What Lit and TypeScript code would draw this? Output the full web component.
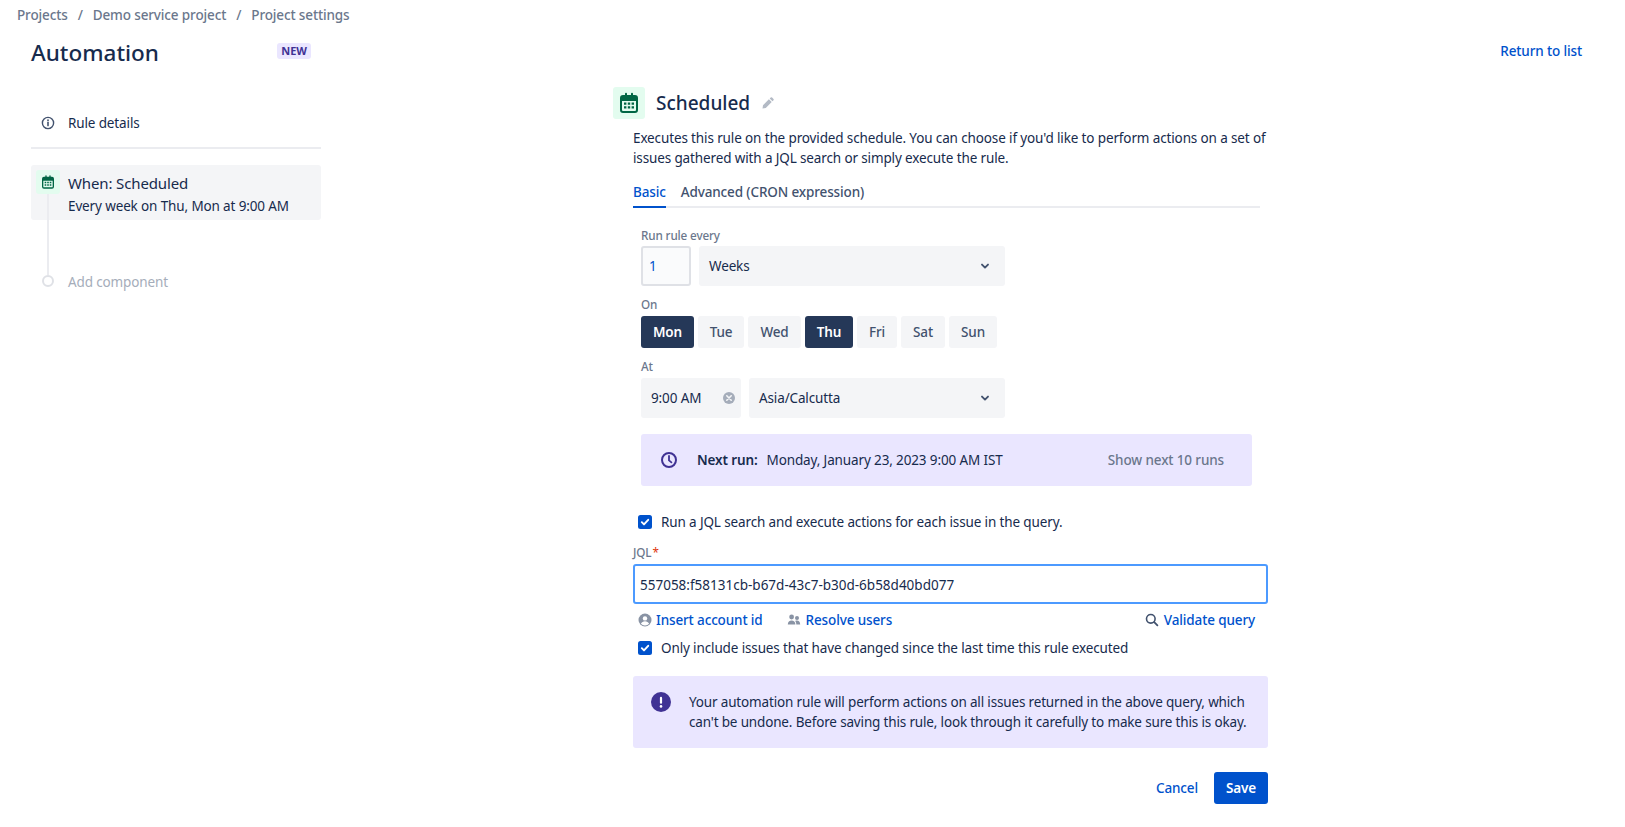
import { LitElement, html, css } from "lit";
import { customElement } from "lit/decorators.js";

const calendar = (s: number) => html`<svg width=${s} height=${s} viewBox="0 0 24 24"><path fill="#006644" fill-rule="evenodd" d="M6 4h2V2.8a1 1 0 0 1 2 0V4h4V2.8a1 1 0 0 1 2 0V4h2a3 3 0 0 1 3 3v12a3 3 0 0 1-3 3H6a3 3 0 0 1-3-3V7a3 3 0 0 1 3-3zm-1 6v9a1 1 0 0 0 1 1h12a1 1 0 0 0 1-1v-9H5z"/><path fill="#006644" d="M7 11.5h2.4v2.2H7zM10.8 11.5h2.4v2.2h-2.4zM14.6 11.5H17v2.2h-2.4zM7 15.3h2.4v2.2H7zM10.8 15.3h2.4v2.2h-2.4zM14.6 15.3H17v2.2h-2.4z"/></svg>`;
const chevron = html`<svg width="16" height="16" viewBox="0 0 16 16"><path d="M5 6.6 8 9.6l3-3" fill="none" stroke="#42526e" stroke-width="1.9" stroke-linecap="round" stroke-linejoin="round"/></svg>`;
const check = html`<svg class="check" width="14" height="14" viewBox="0 0 14 14"><rect width="14" height="14" rx="2.5" fill="#0052cc"/><path d="M3.8 7.2 6 9.4l4.2-4.6" fill="none" stroke="#fff" stroke-width="1.9" stroke-linecap="round" stroke-linejoin="round"/></svg>`;

@customElement("app-root")
export class AppRoot extends LitElement {
  static styles = css`
    :host { display: block; width: 100%; height: 827px; overflow: hidden; background: #fff; color: #172b4d;
      font-family: "Noto Sans", "Open Sans", sans-serif; font-size: 13.5px; letter-spacing: -0.13px; }
    .crumbs { height: 30px; padding-left: 17px; display: flex; align-items: center; color: #6b778c; font-weight: 500; }
    .crumbs .sep { margin: 0 10px; }
    .top { display: flex; align-items: center; height: 32px; margin-top: 5px; padding: 0 43px 0 31px; }
    .title-wrap { width: 280px; display: flex; align-items: center; justify-content: space-between; }
    h1 { margin: 4px 0 0; font-size: 22.5px; font-weight: 500; letter-spacing: 0; line-height: 32px; }
    .lozenge { background: #eae6ff; color: #403294; font-size: 11px; font-weight: 700; line-height: 16px; padding: 0 4px; border-radius: 3px; letter-spacing: 0; }
    .return { margin-left: auto; color: #0052cc; font-weight: 500; }
    .body { display: flex; margin-top: 20px; }
    .side { width: 290px; margin-left: 31px; padding-top: 17px; flex: none; }
    .details { height: 37px; padding-bottom: 6px; display: flex; align-items: center; border-bottom: 2px solid #ebecf0; }
    .details svg { margin-left: 9px; margin-right: 12px; }
    .timeline { position: relative; margin-top: 16px; }
    .card { height: 55px; background: #f4f5f7; border-radius: 3px; display: flex; padding: 5px; box-sizing: border-box; }
    .mini { width: 24px; height: 24px; background: #e3fcef; border-radius: 3px; display: flex; align-items: center; justify-content: center; flex: none; }
    .card-text { margin: 1px 0 0 8px; }
    .card-title { font-size: 15px; line-height: 24px; }
    .card-sub { line-height: 21px; margin-top: 1px; }
    .line { position: absolute; left: 16px; top: 29px; width: 2px; height: 81px; background: #ebecf0; }
    .add { display: flex; align-items: center; height: 20px; margin-top: 51px; color: #a5adba; }
    .add .txt { padding-top: 2px; }
    .dot { width: 8px; height: 8px; border: 2px solid #dfe1e6; border-radius: 50%; margin-left: 11px; margin-right: 14px; }
    .main { width: 655px; margin-left: 292px; flex: none; }
    .head { display: flex; align-items: center; height: 32px; }
    .head-icon { width: 32px; height: 32px; background: #e3fcef; border-radius: 3px; display: flex; align-items: center; justify-content: center; }
    h2 { margin: 0 10px 0 11px; font-size: 19px; font-weight: 500; letter-spacing: 0; }
    .desc { margin: 8.5px 0 0 20px; line-height: 20px; width: 640px; }
    .tabs { margin: 12.5px 0 0 20px; width: 627px; height: 26px; border-bottom: 2px solid #ebecf0; display: flex; gap: 15px; font-weight: 500; color: #42526e; }
    .tab { line-height: 24px; }
    .tab.on { color: #0052cc; border-bottom: 2px solid #0052cc; height: 26px; }
    .form { padding-left: 28px; }
    .lbl { font-size: 11.7px; color: #6b778c; font-weight: 500; line-height: 16px; height: 16px; margin-bottom: 4px; }
    .first { margin-top: 19px; margin-bottom: 3px; }
    .row { display: flex; gap: 8px; }
    .num { width: 50px; height: 40px; box-sizing: border-box; border: 2px solid #dfe1e6; background: #fafbfc; border-radius: 3px; padding-left: 6px; display: flex; align-items: center; color: #0052cc; }
    .select { height: 40px; width: 306px; box-sizing: border-box; background: #f4f5f7; border-radius: 3px; display: flex; align-items: center; justify-content: space-between; padding: 0 12px 0 10px; }
    .select.tz { width: 256px; }
    .on-lbl { margin-top: 10px; }
    .days { display: flex; gap: 4px; }
    .day { height: 32px; border-radius: 3px; background: #f4f5f7; color: #42526e; display: flex; align-items: center; justify-content: center; font-weight: 500; }
    .day.sel { background: #253858; color: #fff; font-weight: 600; }
    .time { width: 100px; height: 40px; box-sizing: border-box; background: #f4f5f7; border-radius: 3px; display: flex; align-items: center; justify-content: space-between; padding: 0 4px 0 10px; }
    .at-lbl { margin-top: 10px; }
    .next { margin-top: 16px; width: 611px; height: 52px; background: #eae6ff; border-radius: 3px; display: flex; align-items: center; padding: 0 28px 0 19px; box-sizing: border-box; }
    .next b { margin: 0 9px 0 19px; font-weight: 600; }
    .show { margin-left: auto; color: #6b778c; font-weight: 500; }
    .chk { display: flex; align-items: center; height: 20px; margin-left: 5px; }
    .chk .check { margin-right: 9px; flex: none; }
    .chk.a { margin-top: 26px; margin-left: 25px; }
    .chk.b { margin-top: 8px; margin-left: 25px; }
    .jql-lbl { margin: 12px 0 4px 20px; font-size: 11.7px; color: #6b778c; font-weight: 500; line-height: 16px; }
    .jql-lbl span { color: #de350b; font-weight: 400; margin-left: 1px; }
    .jql { margin-left: 20px; width: 635px; height: 40px; box-sizing: border-box; border: 2px solid #4c9aff; border-radius: 3px; display: flex; align-items: center; padding: 1px 0 0 5px; letter-spacing: 0; }
    .links { margin: 6px 0 0 20px; width: 617px; height: 20px; display: flex; align-items: center; color: #0052cc; font-weight: 500; padding-left: 5px; }
    .links svg { margin-right: 4px; flex: none; }
    .links .res { margin-left: 24px; }
    .links .res svg { margin-right: 5px; }
    .links .val { margin-left: auto; display: flex; align-items: center; }
    .links span { display: flex; align-items: center; }
    .warn { margin: 18px 0 0 20px; width: 635px; height: 72px; box-sizing: border-box; background: #eae6ff; border-radius: 3px; padding: 16px 16px 16px 17px; display: flex; }
    .warn svg { flex: none; margin-right: 17px; }
    .warn p { margin: 0; line-height: 20px; letter-spacing: -0.16px; }
    .actions { margin-top: 24px; display: flex; justify-content: flex-end; align-items: center; gap: 16px; }
    .cancel { color: #0052cc; font-weight: 500; }
    .save { width: 54px; height: 32px; background: #0052cc; color: #fff; border-radius: 3px; display: flex; align-items: center; justify-content: center; font-weight: 600; }
  `;

  render() {
    const days: [string, number, boolean][] = [["Mon", 53, true], ["Tue", 46, false], ["Wed", 53, false], ["Thu", 48, true], ["Fri", 40, false], ["Sat", 44, false], ["Sun", 48, false]];
    return html`
      <div class="crumbs"><span>Projects</span><span class="sep">/</span><span>Demo service project</span><span class="sep">/</span><span>Project settings</span></div>
      <div class="top">
        <div class="title-wrap"><h1>Automation</h1><span class="lozenge">NEW</span></div>
        <span class="return">Return to list</span>
      </div>
      <div class="body">
        <aside class="side">
          <div class="details">
            <svg width="16" height="16" viewBox="0 0 16 16"><circle cx="8" cy="8" r="5.6" fill="none" stroke="#42526e" stroke-width="1.4"/><path d="M8 7.4v3.2" stroke="#42526e" stroke-width="1.6" stroke-linecap="round"/><circle cx="8" cy="5.2" r="0.9" fill="#42526e"/></svg>
            <span>Rule details</span>
          </div>
          <div class="timeline">
            <div class="card">
              <div class="mini">${calendar(16)}</div>
              <div class="card-text">
                <div class="card-title">When: Scheduled</div>
                <div class="card-sub">Every week on Thu, Mon at 9:00 AM</div>
              </div>
            </div>
            <div class="line"></div>
            <div class="add"><span class="dot"></span><span class="txt">Add component</span></div>
          </div>
        </aside>
        <main class="main">
          <div class="head">
            <div class="head-icon">${calendar(24)}</div>
            <h2>Scheduled</h2>
            <svg width="16" height="16" viewBox="0 0 16 16"><path fill="#b3bac5" d="M10.7 2.5a1 1 0 0 1 1.4 0l1.4 1.4a1 1 0 0 1 0 1.4l-1 1L9.7 3.5zM8.9 4.3l2.8 2.8-5.9 5.9-3.3.6.5-3.4z"/></svg>
          </div>
          <p class="desc">Executes this rule on the provided schedule. You can choose if you'd like to perform actions on a set of issues gathered with a JQL search or simply execute the rule.</p>
          <div class="tabs"><span class="tab on">Basic</span><span class="tab">Advanced (CRON expression)</span></div>
          <div class="form">
            <div class="lbl first">Run rule every</div>
            <div class="row"><div class="num">1</div><div class="select"><span>Weeks</span>${chevron}</div></div>
            <div class="lbl on-lbl">On</div>
            <div class="days">${days.map(([d, w, s]) => html`<div class="day ${s ? "sel" : ""}" style="width:${w}px">${d}</div>`)}</div>
            <div class="lbl at-lbl">At</div>
            <div class="row">
              <div class="time"><span>9:00 AM</span><svg width="16" height="16" viewBox="0 0 16 16"><circle cx="8" cy="8" r="6" fill="#a5adba"/><path d="M5.8 5.8l4.4 4.4M10.2 5.8l-4.4 4.4" stroke="#f4f5f7" stroke-width="1.6" stroke-linecap="round"/></svg></div>
              <div class="select tz"><span>Asia/Calcutta</span>${chevron}</div>
            </div>
            <div class="next">
              <svg width="18" height="18" viewBox="0 0 18 18"><circle cx="9" cy="9" r="7" fill="none" stroke="#403294" stroke-width="2"/><path d="M9 5v4.4l2.4 2" fill="none" stroke="#403294" stroke-width="1.8" stroke-linecap="round" stroke-linejoin="round"/></svg>
              <b>Next run:</b><span>Monday, January 23, 2023 9:00 AM IST</span><span class="show">Show next 10 runs</span>
            </div>
          </div>
          <div class="chk a">${check}<span>Run a JQL search and execute actions for each issue in the query.</span></div>
          <div class="jql-lbl">JQL<span>*</span></div>
          <div class="jql">557058:f58131cb-b67d-43c7-b30d-6b58d40bd077</div>
          <div class="links">
            <span><svg width="14" height="14" viewBox="0 0 14 14"><circle cx="7" cy="7" r="6.5" fill="#8993a4"/><circle cx="7" cy="5.4" r="2.2" fill="#fff"/><path d="M2.9 10.8c.7-1.7 2.3-2.6 4.1-2.6s3.4.9 4.1 2.6A5.4 5.4 0 0 1 7 12.6a5.4 5.4 0 0 1-4.1-1.8z" fill="#fff"/></svg>Insert account id</span>
            <span class="res"><svg width="14" height="14" viewBox="0 0 14 14"><circle cx="4.6" cy="4" r="2.4" fill="#8993a4"/><circle cx="10" cy="5" r="2" fill="#8993a4"/><path d="M.8 11.5c0-2.4 1.7-4 3.8-4s3.8 1.6 3.8 4zM9.3 11.5c0-1.5-.4-2.7-1.1-3.5.5-.3 1.1-.4 1.8-.4 1.8 0 3.2 1.4 3.2 3.9z" fill="#8993a4"/></svg>Resolve users</span>
            <span class="val"><svg width="16" height="16" viewBox="0 0 16 16"><circle cx="6.8" cy="6.8" r="4.3" fill="none" stroke="#42526e" stroke-width="1.6"/><path d="M10.2 10.2l3.2 3.2" stroke="#42526e" stroke-width="1.8" stroke-linecap="round"/></svg>Validate query</span>
          </div>
          <div class="chk b">${check}<span>Only include issues that have changed since the last time this rule executed</span></div>
          <div class="warn">
            <svg width="22" height="22" viewBox="0 0 22 22"><circle cx="11" cy="10" r="10" fill="#403294"/><rect x="9.9" y="4.8" width="2.2" height="7" rx="1.1" fill="#fff"/><circle cx="11" cy="14.4" r="1.3" fill="#fff"/></svg>
            <p>Your automation rule will perform actions on all issues returned in the above query, which<br />can't be undone. Before saving this rule, look through it carefully to make sure this is okay.</p>
          </div>
          <div class="actions"><span class="cancel">Cancel</span><div class="save">Save</div></div>
        </main>
      </div>
    `;
  }
}
